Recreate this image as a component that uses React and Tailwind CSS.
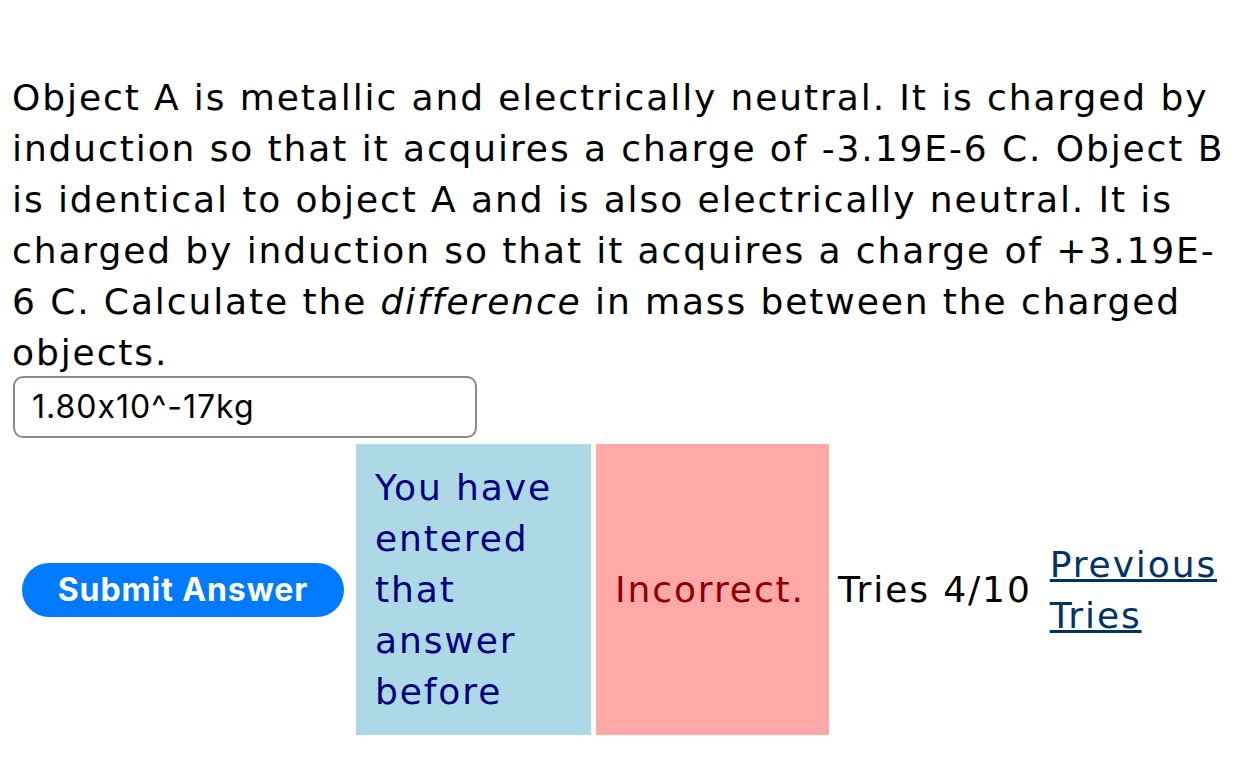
const App = () => {
  return (
    <div className="bg-white min-h-screen px-3 pt-[72px] font-['DejaVu_Sans',Verdana,sans-serif] text-black tracking-[1.9px]">
      <p className="text-[36px] leading-[51px] w-[1222px]">
        Object A is metallic and electrically neutral. It is charged by
        induction so that it acquires a charge of -3.19E-6 C. Object B is
        identical to object A and is also electrically neutral. It is charged
        by induction so that it acquires a charge of +3.19E-6 C. Calculate the{" "}
        <em>difference</em> in mass between the charged objects.
      </p>

      <div className="-mt-[2px] w-[464px] h-[62px] ml-px border-2 border-[#8a8a8a] rounded-[10px] flex items-center px-[17px] font-['Inter',sans-serif] text-[32px] tracking-[1px] [font-feature-settings:'calt'_0]">
        1.80x10^-17kg
      </div>

      <div className="flex items-stretch mt-[6px] h-[291px]">
        <div className="flex items-center pl-[10px] pr-[12px]">
          <button className="h-[54px] w-[322px] rounded-full bg-[#007bff] text-white font-['Inter',sans-serif] font-bold text-[32px] tracking-[0.9px]">
            Submit Answer
          </button>
        </div>
        <div className="w-[235px] bg-[#add8e6] text-[#000080] text-[36px] leading-[51px] pl-[19px] pr-2 flex items-center">
          You have entered that answer before
        </div>
        <div className="ml-[5px] w-[233px] bg-[#ffa8a8] text-[#8b0000] text-[36px] flex items-center pl-[19px]">
          Incorrect.
        </div>
        <div className="flex items-center pl-[9px] text-[36px]">Tries 4/10</div>
        <div className="flex items-center pl-[18px] text-[36px] leading-[51px]">
          <a href="#" className="text-[#003366] underline w-[180px]">
            Previous Tries
          </a>
        </div>
      </div>
    </div>
  );
};

export default App;
